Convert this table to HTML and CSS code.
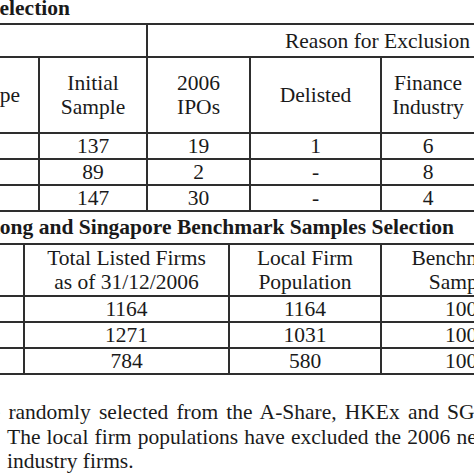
FILE: index.html
```html
<!DOCTYPE html>
<html lang="en">
  <head>
    <meta charset="UTF-8" />
    <meta name="viewport" content="width=device-width, initial-scale=1.0" />
    <title>Sample Selection</title>
    <link rel="stylesheet" href="styles.css">
  </head>
  <body>
    <div class="sheet">
      <div class="caption caption-a">Panel A: Sample Selection</div>
      <table class="grid grid-a">
        <colgroup>
          <col class="c-type"><col class="c-init"><col class="c-ipo">
          <col class="c-del"><col class="c-fin"><col class="c-miss">
        </colgroup>
        <tr class="group">
          <th colspan="2"></th>
          <th colspan="4">Reason for Exclusion</th>
        </tr>
        <tr class="head">
          <th>Sample Type</th>
          <th>Initial<br>Sample</th>
          <th>2006<br>IPOs</th>
          <th>Delisted</th>
          <th>Finance<br>Industry</th>
          <th>Missing<br>Financial<br>Data</th>
        </tr>
        <tr>
          <td class="label">A-Share</td><td>137</td><td>19</td><td>1</td><td>6</td><td>-</td>
        </tr>
        <tr>
          <td class="label">HKEx</td><td>89</td><td>2</td><td>-</td><td>8</td><td>-</td>
        </tr>
        <tr>
          <td class="label">SGX</td><td>147</td><td>30</td><td>-</td><td>4</td><td>-</td>
        </tr>
      </table>

      <div class="caption caption-b">Panel B: Hong Kong and Singapore Benchmark Samples Selection</div>
      <table class="grid grid-b">
        <colgroup>
          <col class="c-mkt"><col class="c-total"><col class="c-local"><col class="c-bench">
        </colgroup>
        <tr class="head">
          <th>Market</th>
          <th>Total Listed Firms<br>as of 31/12/2006</th>
          <th>Local Firm<br>Population</th>
          <th>Benchmark<br>Sample</th>
        </tr>
        <tr>
          <td class="label">A-Share</td><td>1164</td><td>1164</td><td>100</td>
        </tr>
        <tr>
          <td class="label">HKEx</td><td>1271</td><td>1031</td><td>100</td>
        </tr>
        <tr>
          <td class="label">SGX</td><td>784</td><td>580</td><td>100</td>
        </tr>
      </table>

      <p class="note">
        <span class="wide">Note: Samples are randomly selected from the A-Share, HKEx and SGX</span><br>
        <span class="loose">The local firm populations have excluded the 2006 new IPOs and the finance</span><br>
        industry firms.
      </p>
    </div>
  </body>
</html>
```

FILE: styles.css
```css
html, body {
  margin: 0;
  overflow: hidden;
  background: #fff;
}
body {
  font-family: "Liberation Serif", "Times New Roman", serif;
  font-size: 21.5px;
  line-height: 24px;
  color: #1a1a1a;
}
.sheet {
  margin-left: -200px;
  width: 1000px;
}
.caption {
  font-weight: bold;
  text-align: right;
  white-space: nowrap;
}
.caption-a {
  width: 270px;
  margin-top: -4px;
}
.caption-b {
  width: 654px;
  margin-top: 3px;
}
.grid {
  border-collapse: collapse;
  table-layout: fixed;
  margin-left: 88px;
}
.grid th,
.grid td {
  border: 2px solid #2e2e2e;
  padding: 0;
  text-align: center;
  font-weight: normal;
  white-space: nowrap;
}
.grid .label {
  text-align: left;
  padding-left: 8px;
}
.group th {
  padding: 3.5px 0;
}
.head th {
  padding: 1px 0;
}
.grid-a {
  width: 719px;
  margin-top: 3px;
}
.c-type { width: 150px; }
.c-init { width: 108px; }
.c-ipo { width: 103px; }
.c-del { width: 131px; }
.c-fin { width: 94px; }
.c-miss { width: 133px; }
.grid-b {
  width: 652px;
  margin-top: 4px;
}
.c-mkt { width: 135px; }
.c-total { width: 205px; }
.c-local { width: 152px; }
.c-bench { width: 160px; }
.note {
  margin: 25px 0 0 207px;
  line-height: 24.5px;
  text-indent: -170px;
  white-space: nowrap;
}
.wide {
  word-spacing: 2.8px;
}
.loose {
  word-spacing: 0.8px;
}
```
